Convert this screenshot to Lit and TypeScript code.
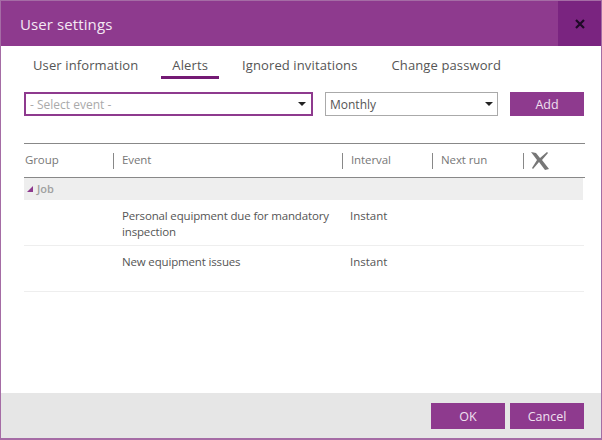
import { LitElement, html, css } from 'lit';
import { customElement } from 'lit/decorators.js';

const tabs = ['User information', 'Alerts', 'Ignored invitations', 'Change password'];
const columns = ['Group', 'Event', 'Interval', 'Next run'];

@customElement('app-root')
export class AppRoot extends LitElement {
  static styles = css`
    :host {
      display: block;
      width: 602px;
      height: 440px;
      font-family: "Open Sans", "Noto Sans", sans-serif;
      font-size: 12px;
      color: #555;
    }
    .dialog {
      box-sizing: border-box;
      width: 602px;
      height: 440px;
      border: 1px solid #a56ca5;
      border-bottom-width: 2px;
      display: flex;
      flex-direction: column;
      background: #fff;
    }
    .title-bar {
      height: 45px;
      flex: none;
      background: #8e3a8e;
      display: flex;
      align-items: center;
      justify-content: space-between;
      color: #fff;
    }
    .title {
      margin-left: 19px;
      font-size: 15px;
      letter-spacing: 0.1px;
      color: #f4e9f4;
    }
    .close {
      width: 43px;
      height: 45px;
      background: #7a2480;
      display: flex;
      align-items: center;
      justify-content: center;
    }
    .content {
      flex: 1;
      padding: 0 16px 0 23px;
    }
    .tabs {
      display: flex;
      gap: 12px;
      margin-left: -2px;
      height: 46px;
      box-sizing: border-box;
    }
    .tab {
      padding: 9px 11px 0;
      height: 33px;
      box-sizing: border-box;
      font-size: 13px;
      line-height: 20px;
      letter-spacing: 0.12px;
      white-space: nowrap;
      color: #555;
    }
    .tab.active {
      border-bottom: 3px solid #741a74;
    }
    .filters {
      display: flex;
      height: 24px;
      margin-bottom: 27px;
    }
    .select {
      box-sizing: border-box;
      height: 24px;
      background: #fff;
      display: flex;
      align-items: center;
      justify-content: space-between;
      font-size: 12px;
    }
    .select.event {
      width: 289px;
      border: 2px solid #8e3a8e;
      padding: 0 5px 0 4px;
      color: #aaa;
    }
    .select.interval {
      width: 173px;
      margin-left: 12px;
      border: 1px solid #aaa;
      padding: 0 4px;
      color: #555;
    }
    .arrow {
      width: 0;
      height: 0;
      border-left: 4px solid transparent;
      border-right: 4px solid transparent;
      border-top: 4px solid #222;
    }
    .btn {
      box-sizing: border-box;
      width: 74px;
      height: 24px;
      background: #8e3a8e;
      color: #f0e0f0;
      display: flex;
      align-items: center;
      justify-content: center;
      font-size: 12.5px;
    }
    .filters .btn {
      margin-left: 12px;
    }
    .head {
      display: grid;
      grid-template-columns: 89px 229px 90px 91px 1fr;
      height: 33px;
      border-top: 1px solid #888;
      border-bottom: 1px solid #888;
      align-items: center;
      width: 561px;
    }
    .head .cell {
      height: 16px;
      line-height: 14px;
      padding-left: 8px;
      border-left: 1px solid #888;
      font-size: 11.5px;
      letter-spacing: -0.1px;
      color: #777;
    }
    .head .cell:first-child {
      border-left: none;
      padding-left: 1px;
    }
    .head .delete {
      display: flex;
      align-items: center;
      height: 16px;
      padding-left: 6px;
      border-left: 1px solid #888;
    }
    .group {
      height: 22px;
      width: 559px;
      background: #eee;
      display: flex;
      align-items: center;
      padding-left: 2px;
      box-sizing: border-box;
      gap: 3px;
      font-size: 11px;
      font-weight: 600;
      color: #a0a0a0;
    }
    .group span {
      padding-bottom: 2px;
    }
    .row {
      display: grid;
      grid-template-columns: 90px 229px 1fr;
      width: 560px;
      height: 46px;
      box-sizing: border-box;
      border-bottom: 1px solid #eee;
      padding-top: 8px;
      line-height: 16px;
      font-size: 11.5px;
    }
    .row .event-cell {
      padding-left: 8px;
      padding-right: 2px;
      letter-spacing: -0.16px;
    }
    .row .interval-cell {
      padding-left: 7px;
    }
    .footer {
      height: 45px;
      flex: none;
      background: #e6e6e6;
      display: flex;
      justify-content: flex-end;
      gap: 5px;
      padding: 10px 17px 0 0;
      box-sizing: border-box;
    }
    .footer .btn {
      height: 26px;
    }
  `;

  render() {
    return html`
      <div class="dialog">
        <div class="title-bar">
          <span class="title">User settings</span>
          <div class="close">
            <svg width="10" height="10" viewBox="0 0 10 10">
              <path d="M1 1 L9 9 M9 1 L1 9" stroke="#1e0a26" stroke-width="2.2" fill="none"></path>
            </svg>
          </div>
        </div>
        <div class="content">
          <div class="tabs">
            ${tabs.map(t => html`<div class="tab ${t === 'Alerts' ? 'active' : ''}">${t}</div>`)}
          </div>
          <div class="filters">
            <div class="select event"><span>- Select event -</span><span class="arrow"></span></div>
            <div class="select interval"><span>Monthly</span><span class="arrow"></span></div>
            <div class="btn">Add</div>
          </div>
          <div class="head">
            ${columns.map(c => html`<div class="cell">${c}</div>`)}
            <div class="delete">
              <svg width="20" height="20" viewBox="0 0 20 20">
                <path d="M1 1 L6 2 L10 7 L17 1 L18 2 L12 9 L19 18 L15 19 L9 11 L3 18 L2 17 L7 9 Z" fill="#777"></path>
              </svg>
            </div>
          </div>
          <div class="group">
            <svg width="8" height="8" viewBox="0 0 8 8"><path d="M7 1 L7 7 L1 7 Z" fill="#8e3a8e"></path></svg>
            <span>Job</span>
          </div>
          <div class="row">
            <div></div>
            <div class="event-cell">Personal equipment due for mandatory inspection</div>
            <div class="interval-cell">Instant</div>
          </div>
          <div class="row">
            <div></div>
            <div class="event-cell">New equipment issues</div>
            <div class="interval-cell">Instant</div>
          </div>
        </div>
        <div class="footer">
          <div class="btn">OK</div>
          <div class="btn">Cancel</div>
        </div>
      </div>
    `;
  }
}
